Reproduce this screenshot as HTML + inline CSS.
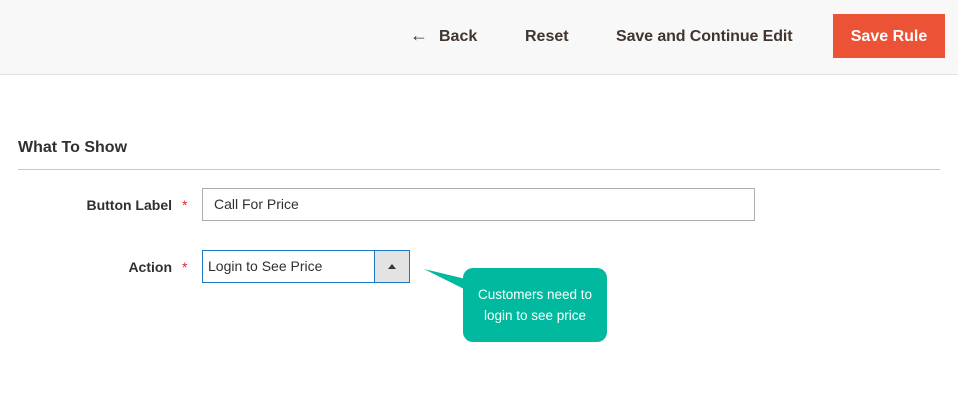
<!DOCTYPE html>
<html><head><style>
body{margin:0;width:958px;height:400px;background:#fff;font-family:"Liberation Sans",sans-serif;position:relative;overflow:hidden;color:#303030}
.hdr{position:absolute;left:0;top:0;width:958px;height:74px;background:#f8f8f8;border-bottom:1px solid #e3e3e3}
.t{position:absolute;font-size:16px;font-weight:bold;color:#41362f;white-space:nowrap}
.btn{position:absolute;left:833px;top:14px;width:112px;height:44px;background:#eb5236;color:#fff;font-weight:bold;font-size:16px;line-height:46px;text-align:center}
.h{position:absolute;left:18px;top:139px;font-size:16px;font-weight:bold;color:#303030}
.line{position:absolute;left:18px;top:169px;width:922px;height:1px;background:#cec7c0}
.lbl{position:absolute;font-size:14px;font-weight:bold;color:#303030;text-align:right;width:160px}
.ast{position:absolute;color:#e22626;font-size:14px}
.inp{position:absolute;box-sizing:border-box;border:1px solid #adadad;font-size:14px;padding-left:11px;line-height:31px}
</style></head><body>
<div class="hdr"></div>
<div class="t" style="left:410px;top:27px;font-size:18px;top:25px">&#8592;</div>
<div class="t" style="left:439px;top:28px">Back</div>
<div class="t" style="left:525px;top:28px">Reset</div>
<div class="t" style="left:616px;top:28px;letter-spacing:-0.1px">Save and Continue Edit</div>
<div class="btn">Save Rule</div>
<div class="h">What To Show</div>
<div class="line"></div>
<div class="lbl" style="left:12px;top:197px">Button Label</div>
<div class="ast" style="left:182px;top:197px">*</div>
<div class="inp" style="left:202px;top:188px;width:553px;height:33px">Call For Price</div>
<div class="lbl" style="left:12px;top:259px">Action</div>
<div class="ast" style="left:182px;top:259px">*</div>
<div class="inp" style="left:202px;top:250px;width:208px;height:33px;border-color:#1979c3;padding-left:5px">Login to See Price</div>
<div style="position:absolute;left:374px;top:251px;width:34px;height:31px;background:#e3e3e3;border-left:1px solid #1979c3"></div>
<div style="position:absolute;left:388px;top:264px;width:0;height:0;border-left:4px solid transparent;border-right:4px solid transparent;border-bottom:5px solid #41362f"></div>
<svg style="position:absolute;left:0;top:0" width="958" height="400"><polygon points="424,269 470,280 470,292" fill="#00b99e"/></svg>
<div style="position:absolute;left:463px;top:268px;width:144px;height:74px;background:#00b99e;border-radius:10px;color:#fff;font-size:13.5px;text-align:center;line-height:21px;box-sizing:border-box;padding-top:16px">Customers need to<br>login to see price</div>
</body></html>
